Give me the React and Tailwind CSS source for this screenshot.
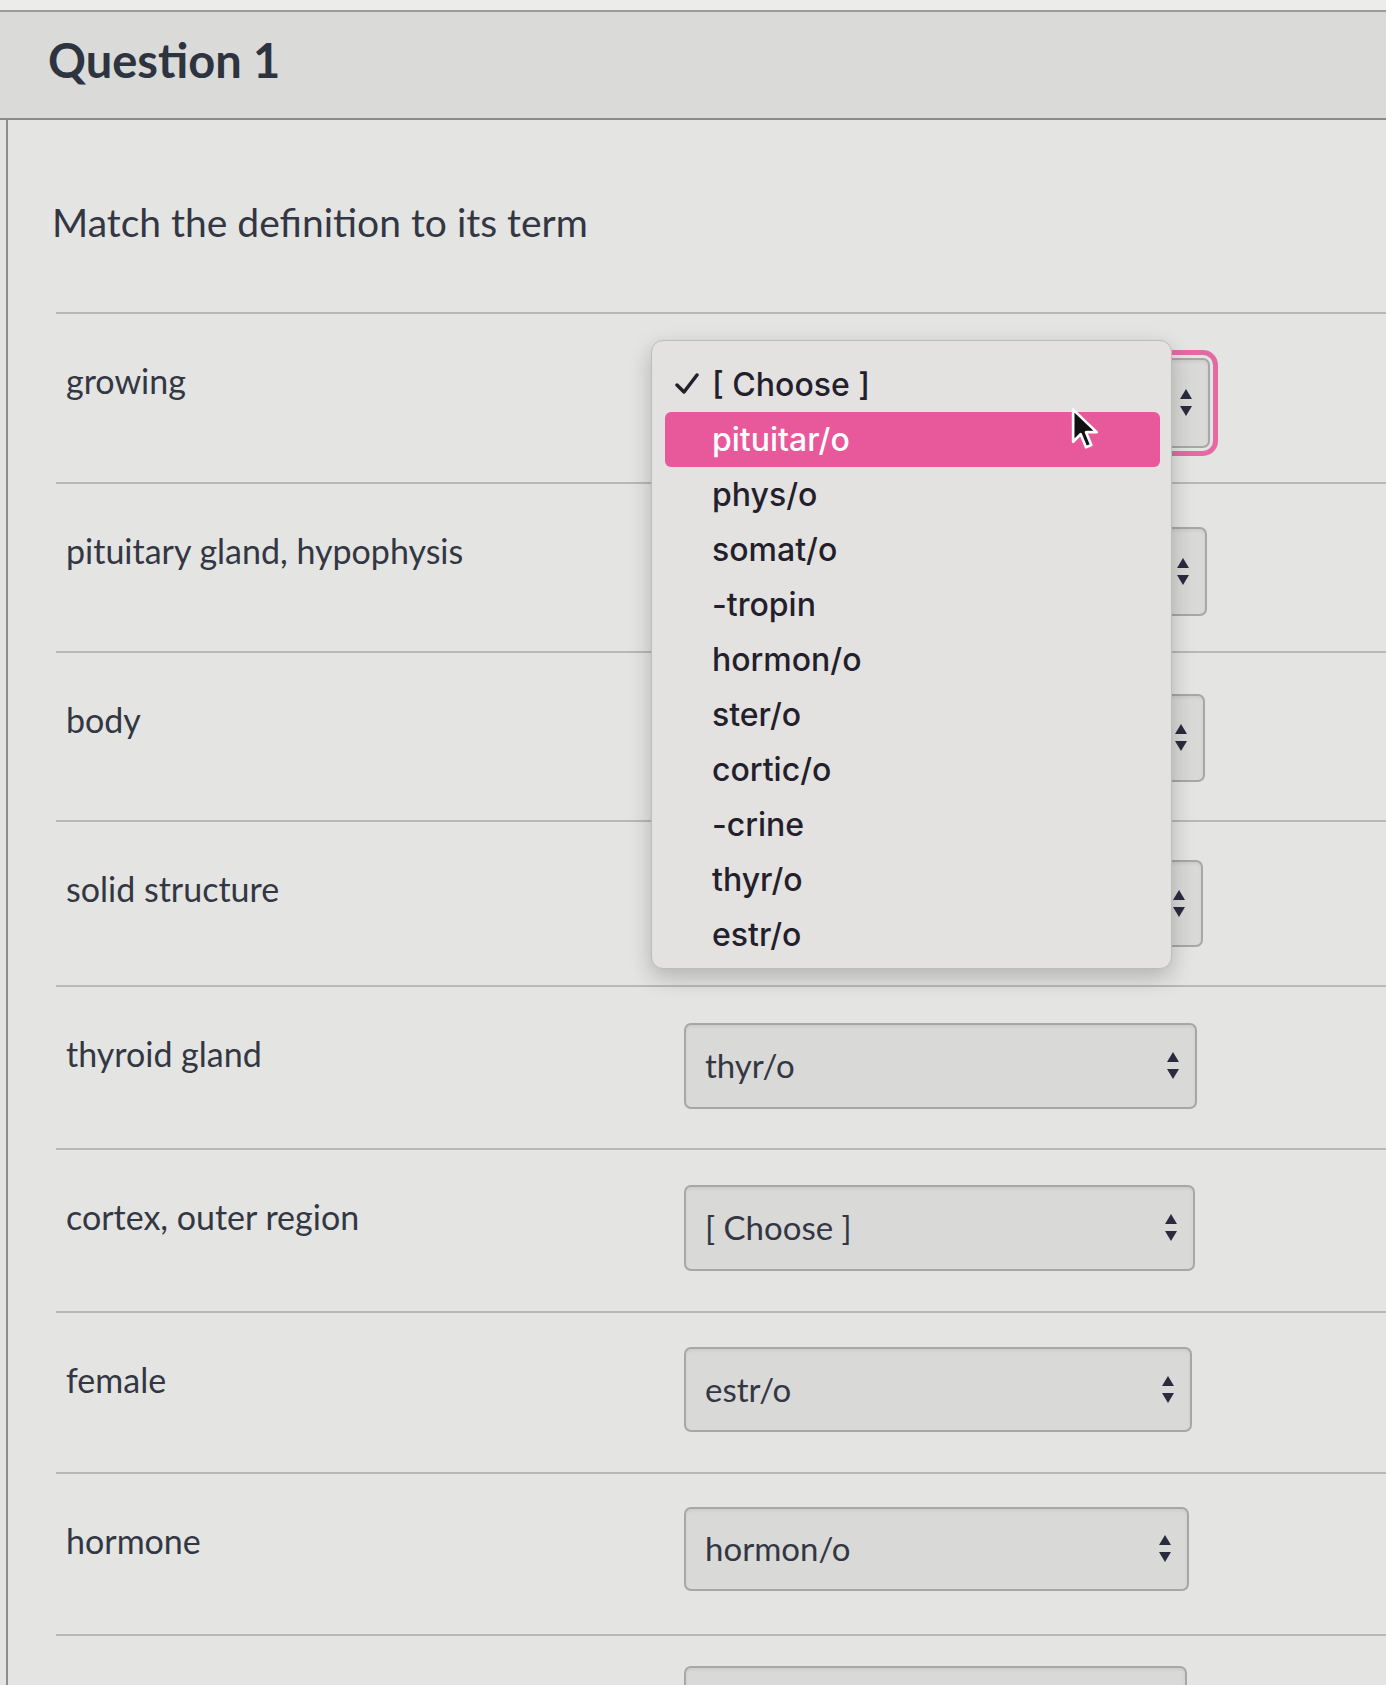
import React from "react";

// row heights / box offsets follow the slight perspective of the original screen
const rows = [
  { term: "growing", value: "", open: true, h: "h-[170px]", box: "mt-[44px] h-[90px] w-[526px]" },
  { term: "pituitary gland, hypophysis", value: "", h: "h-[169px]", box: "mt-[43px] h-[89px] w-[523px]" },
  { term: "body", value: "", h: "h-[169px]", box: "mt-[41px] h-[88px] w-[521px]" },
  { term: "solid structure", value: "", h: "h-[165px]", box: "mt-[38px] h-[87px] w-[519px]" },
  { term: "thyroid gland", value: "thyr/o", h: "h-[163px]", box: "mt-[36px] h-[86px] w-[513px]" },
  { term: "cortex, outer region", value: "[ Choose ]", h: "h-[163px]", box: "mt-[35px] h-[86px] w-[511px]" },
  { term: "female", value: "estr/o", h: "h-[161px]", box: "mt-[34px] h-[85px] w-[508px]" },
  { term: "hormone", value: "hormon/o", h: "h-[162px]", box: "mt-[33px] h-[84px] w-[505px]" },
  { term: "", value: "", h: "h-[162px]", box: "mt-[30px] h-[84px] w-[503px]" },
];

const options = [
  "[ Choose ]",
  "pituitar/o",
  "phys/o",
  "somat/o",
  "-tropin",
  "hormon/o",
  "ster/o",
  "cortic/o",
  "-crine",
  "thyr/o",
  "estr/o",
];

const UpDown = () => (
  <svg width="12" height="28" viewBox="0 0 12 28" className="shrink-0">
    <path d="M6 0 L12 10 L0 10 Z" fill="#2b2b3f" />
    <path d="M0 17 L12 17 L6 27 Z" fill="#2b2b3f" />
  </svg>
);

const Cursor = () => (
  <svg width="30" height="46" viewBox="0 0 28 42" className="absolute left-[419px] top-[66px]">
    <path
      d="M2 2 L2 32 L9 25 L14 37 L19 35 L14 23 L24 23 Z"
      fill="#111"
      stroke="#fff"
      strokeWidth="2.5"
      strokeLinejoin="round"
    />
  </svg>
);

const PopupMenu = () => (
  <div className="absolute left-[-33px] top-[-18px] z-20 w-[521px] rounded-[12px] border border-[#bcbcba] bg-[#e3e2e0] pl-[13px] pr-[11px] pt-[16px] pb-[6px] shadow-[0_8px_22px_rgba(0,0,0,0.22)] font-['Inter','Liberation_Sans',sans-serif] text-[32px] font-medium text-[#241f2c]">
    {options.map((opt, i) => (
      <div
        key={opt}
        className={`relative flex h-[55px] items-center rounded-[6px] pl-[47px] ${
          i === 1 ? "bg-[#e8599c] text-white" : ""
        }`}
      >
        {i === 0 && (
          <svg width="24" height="22" viewBox="0 0 24 22" className="absolute left-[10px] top-[16px]">
            <path d="M2 12 L9 19 L22 2" fill="none" stroke="#241f2c" strokeWidth="3.5" strokeLinecap="round" strokeLinejoin="round" />
          </svg>
        )}
        {opt}
      </div>
    ))}
    <Cursor />
  </div>
);

const Select = ({ value, open, box }) => (
  <div className={`relative ${box.split(" ")[0]}`}>
    <div
      className={`flex ${box.split(" ").slice(1).join(" ")} items-center justify-between rounded-[7px] border-2 border-[#a7a7a5] bg-[#d9d9d7] pl-[19px] pr-[16px] text-[33px] text-[#333743] shadow-[inset_0_2px_3px_rgba(0,0,0,0.06)] ${
        open ? "ring-[5px] ring-[#e46aa4] ring-offset-[3px] ring-offset-[#e4e4e2]" : ""
      }`}
    >
      <span>{value}</span>
      <UpDown />
    </div>
    {open && <PopupMenu />}
  </div>
);

export default function App() {
  return (
    <div className="h-[1685px] w-[1386px] overflow-hidden bg-[#e4e4e2] font-['Lato','Liberation_Sans',sans-serif] text-[#333743]">
      {/* top strip */}
      <div className="h-[10px] bg-[#ececea]" />

      {/* Header */}
      <div className="h-[110px] border-y-2 border-t-[#9c9c9a] border-b-[#8a8a8a] bg-[#dadad8] pl-[48px] pt-[25px]">
        <h2 className="text-[47px] leading-none font-bold text-[#2d3440]">Question 1</h2>
      </div>

      {/* Body */}
      <div className="ml-[6px] border-l-2 border-[#8e8e8c] pl-[44px]">
        <p className="pt-[83px] pb-[70px] text-[39px] leading-none text-[#333743]">
          Match the definition to its term
        </p>

        <div className="ml-[4px]">
          {rows.map((row, i) => (
            <div key={i} className={`flex ${row.h} border-t-2 border-[#b8b8b6]`}>
              <div className="w-[628px] shrink-0 pl-[10px] pt-[50px] text-[34px] leading-none">
                {row.term}
              </div>
              <Select value={row.value} open={row.open} box={row.box} />
            </div>
          ))}
        </div>
      </div>
    </div>
  );
}
